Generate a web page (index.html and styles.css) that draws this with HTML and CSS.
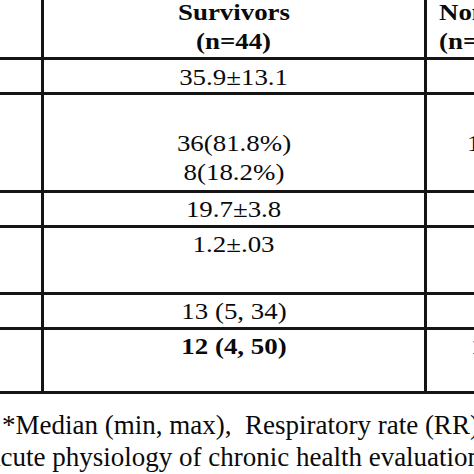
FILE: index.html
```html
<!DOCTYPE html>
<html>
<head>
<meta charset="utf-8">
<link rel="stylesheet" href="styles.css">
</head>
<body>
<div class="page">
  <div class="table">
    <div class="row hdr">
      <div class="cell first"></div>
      <div class="cell mid"><div class="in"><span class="t b">Survivors</span><br><span class="t b">(n=44)</span></div></div>
      <div class="cell last left"><div class="in"><span class="t b">Non-Survivors</span><br><span class="t b">(n=16)</span></div></div>
    </div>
    <div class="row r1">
      <div class="cell first"></div>
      <div class="cell mid"><span class="t">35.9±13.1</span></div>
      <div class="cell last"><span class="t">37.2±9.5</span></div>
    </div>
    <div class="row r2">
      <div class="cell first"></div>
      <div class="cell mid"><span class="t">36(81.8%)</span><br><span class="t">8(18.2%)</span></div>
      <div class="cell last"><span class="t">14(87.5%)</span><br><span class="t">2(12.5%)</span></div>
    </div>
    <div class="row r3">
      <div class="cell first"></div>
      <div class="cell mid"><span class="t">19.7±3.8</span></div>
      <div class="cell last"><span class="t">21.3±4.1</span></div>
    </div>
    <div class="row r4">
      <div class="cell first"></div>
      <div class="cell mid"><span class="t">1.2±.03</span></div>
      <div class="cell last"><span class="t">1.3±.05</span></div>
    </div>
    <div class="row r5">
      <div class="cell first"></div>
      <div class="cell mid"><span class="t">13 (5, 34)</span></div>
      <div class="cell last"><span class="t">9 (3, 28)</span></div>
    </div>
    <div class="row r6">
      <div class="cell first"></div>
      <div class="cell mid"><span class="t b">12 (4, 50)</span></div>
      <div class="cell last"><span class="t b">15 (6, 45)</span></div>
    </div>
  </div>
  <div class="note">
    <div class="line l1">*Median (min, max),&nbsp; Respiratory rate (RR), Glasgow coma scale (GCS)</div>
    <div class="line l2">Acute physiology of chronic health evaluation II (APACHE II)</div>
  </div>
</div>
</body>
</html>
```

FILE: styles.css
```css
html, body {
  margin: 0;
  padding: 0;
  background: #ffffff;
  overflow: hidden;
}
.page {
  width: 474px;
  height: 474px;
  overflow: hidden;
  position: relative;
  font-family: "Liberation Serif", "Times New Roman", serif;
  color: #0a0a0a;
}
.table {
  width: 700px;
}
.row {
  display: grid;
  grid-template-columns: 44px 383px 194px;
  border-bottom: 3px solid #151515;
  box-sizing: border-box;
}
.cell {
  font-size: 24px;
  line-height: 29px;
  text-align: center;
  white-space: nowrap;
}
.cell.first, .cell.mid {
  border-right: 3px solid #151515;
}
.t {
  display: inline-block;
  transform: scaleX(1.12);
  transform-origin: center;
}
.b { font-weight: bold; }
.left { text-align: left; padding-left: 12px; }
.left .t { transform-origin: left; }
.in { margin-top: -2px; }

.hdr { height: 60px; }
.r1 { height: 35px; }
.r2 { height: 98px; }
.r3 { height: 35px; }
.r4 { height: 67px; }
.r5 { height: 35px; }
.r6 { height: 64px; }

.r1 .cell { padding-top: 3px; }
.r3 .cell, .r4 .cell, .r5 .cell, .r6 .cell { padding-top: 2px; }
.r2 .cell { padding-top: 34px; }

.note {
  margin-left: -19px;
  margin-top: 15px;
  font-size: 27px;
  line-height: 32px;
  white-space: nowrap;
}
.l1 { padding-left: 21px; }
```
